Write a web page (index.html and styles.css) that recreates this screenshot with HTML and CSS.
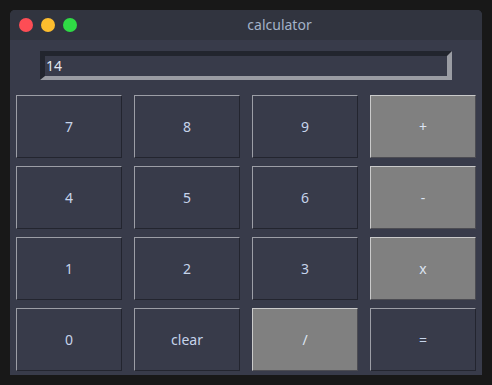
FILE: index.html
```html
<!DOCTYPE html>
<html lang="en">
<head>
  <meta charset="UTF-8" />
  <title>calculator</title>
  <link rel="stylesheet" href="styles.css">
</head>
<body>
  <div class="window">
    <div class="titlebar">
      <div class="dots">
        <span class="dot red"></span>
        <span class="dot yellow"></span>
        <span class="dot green"></span>
      </div>
      <div class="title">calculator</div>
    </div>

    <div class="content">
      <div class="entry">14</div>

      <div class="keys">
        <button class="key">7</button>
        <button class="key">8</button>
        <button class="key">9</button>
        <button class="key op">+</button>
        <button class="key">4</button>
        <button class="key">5</button>
        <button class="key">6</button>
        <button class="key op">-</button>
        <button class="key">1</button>
        <button class="key">2</button>
        <button class="key">3</button>
        <button class="key op">x</button>
        <button class="key">0</button>
        <button class="key">clear</button>
        <button class="key op">/</button>
        <button class="key">=</button>
      </div>
    </div>
  </div>
</body>
</html>
```

FILE: styles.css
```css
body {
  margin: 0;
  padding: 10px;
  background: #181818;
  font-family: 'Noto Sans', sans-serif;
  font-size: 14px;
}
.window {
  width: 472px;
  height: 365px;
  background: #383b4a;
  border-radius: 5px 5px 0 0;
  overflow: hidden;
}
.titlebar {
  height: 30px;
  background: #31343f;
  display: flex;
  align-items: center;
  padding-left: 9px;
}
.dots {
  display: flex;
  gap: 8px;
}
.dot {
  width: 14px;
  height: 14px;
  border-radius: 50%;
}
.red { background: #fd4d55; }
.yellow { background: #fdbd2e; }
.green { background: #2fdb45; }
.title {
  flex: 1;
  text-align: center;
  color: #a3b2c8;
  line-height: 30px;
}
.content {
  padding: 11px 6px 0;
}
.entry {
  margin: 0 24px;
  height: 29px;
  box-sizing: border-box;
  border-style: solid;
  border-width: 5px 5px 4px 5px;
  border-color: #22252e #9a9ca3 #9a9ca3 #22252e;
  background: #383b4a;
  color: #e2e6f0;
  line-height: 20px;
  padding-left: 1px;
}
.keys {
  display: grid;
  grid-template-columns: repeat(4, 106px);
  grid-auto-rows: 63px;
  gap: 8px 12px;
  margin-top: 15px;
}
.key {
  margin: 0;
  padding: 0;
  font-family: inherit;
  font-size: 14px;
  color: #c6d4ea;
  background: #383b4a;
  border: 1px solid;
  border-color: #9c9ea6 #23252f #23252f #9c9ea6;
}
.key.op {
  background: #808080;
  color: #dce4f2;
  border-color: #cacaca #4c4c52 #4c4c52 #cacaca;
}
```
